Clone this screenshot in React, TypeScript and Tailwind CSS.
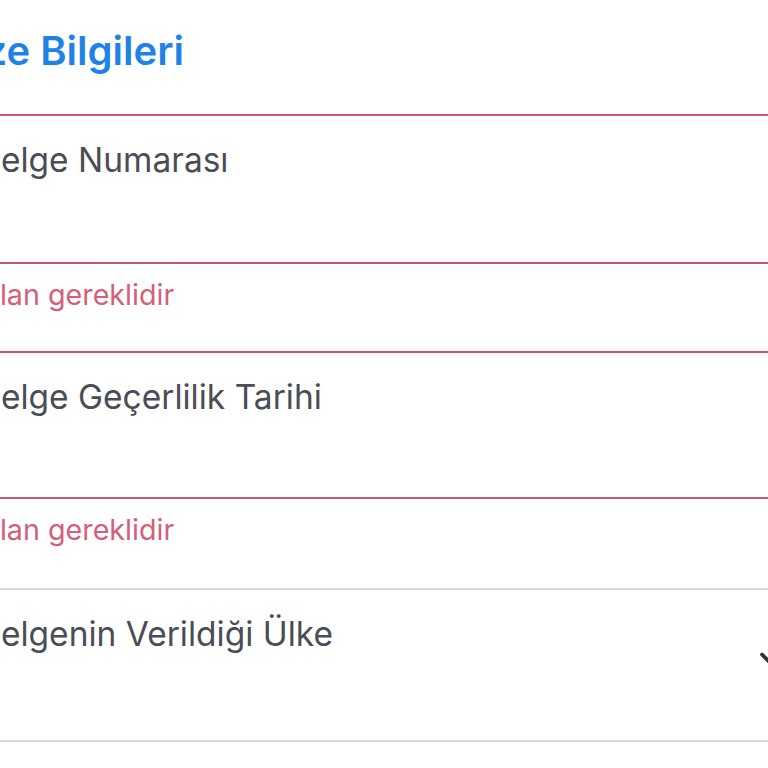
import { ChevronDown } from "lucide-react";

const font = { fontFamily: "Inter, 'Noto Sans', sans-serif" };

function Field({
  label,
  error,
  select,
  boxClass,
  errorClass,
}: {
  label: string;
  error?: string;
  select?: boolean;
  boxClass: string;
  errorClass?: string;
}) {
  return (
    <div>
      <div
        className={`relative flex flex-col border-2 pl-[37px] pt-[28px] ${boxClass} ${
          error ? "border-[#c9566f]" : "border-[#d6d6d6]"
        }`}
      >
        <span className="text-[33.5px] leading-none text-[#4a4d55]">{label}</span>
        {select && (
          <ChevronDown
            className="absolute right-[-1px] top-[51px] h-[36px] w-[36px] text-[#333]"
            strokeWidth={2.5}
          />
        )}
      </div>
      {error && (
        <div className={`pt-[17px] text-[28.7px] leading-none text-[#d3607a] ${errorClass}`}>
          {error}
        </div>
      )}
    </div>
  );
}

export default function App() {
  return (
    <div className="h-[768px] w-[768px] overflow-hidden bg-white" style={font}>
      <div className="-ml-[60px] w-[850px]">
        <div className="h-[114px] pl-[5px] pt-[31px]">
          <h2 className="text-[40px] font-semibold leading-none text-[#1f82e8]">Vize Bilgileri</h2>
        </div>
        <Field
          label="Belge Numarası"
          error="Bu alan gereklidir"
          boxClass="h-[150px]"
          errorClass="h-[87px]"
        />
        <Field
          label="Belge Geçerlilik Tarihi"
          error="Bu alan gereklidir"
          boxClass="h-[148px]"
          errorClass="h-[89px]"
        />
        <Field label="Belgenin Verildiği Ülke" select boxClass="h-[154px]" />
      </div>
    </div>
  );
}
